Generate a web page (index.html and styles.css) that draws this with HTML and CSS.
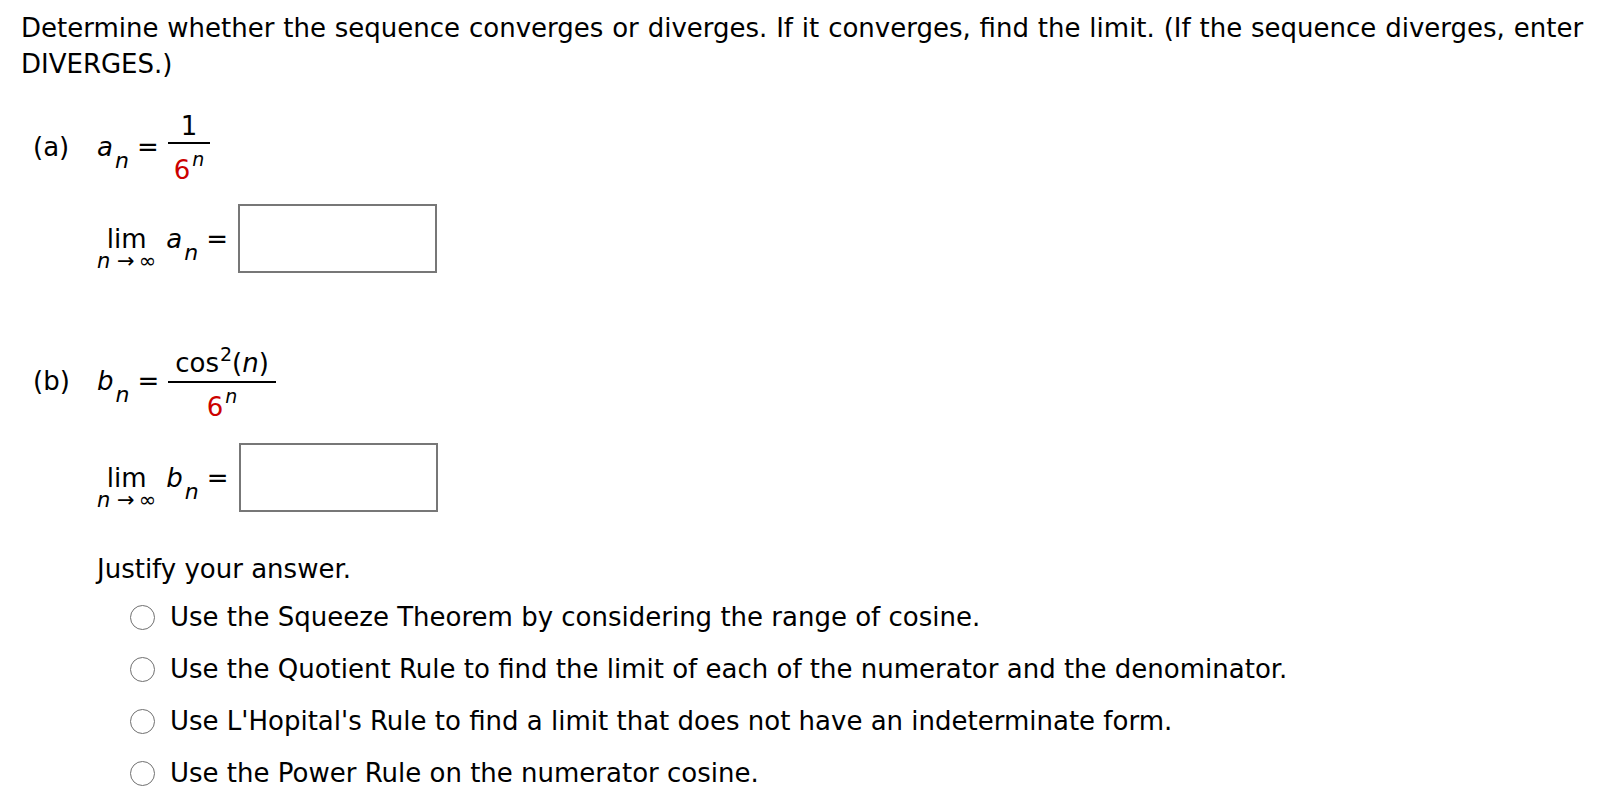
FILE: index.html
```html
<!DOCTYPE html>
<html lang="en">
<head>
<meta charset="utf-8">
<title>Sequence convergence</title>
<link rel="stylesheet" href="styles.css">
</head>
<body>
<div class="page">
  <p class="prompt">Determine whether the sequence converges or diverges. If it converges, find the limit. (If the sequence diverges, enter DIVERGES.)</p>

  <div class="part part-a">
    <div class="def"><span class="label">(a)</span><span class="var"><i>a</i><sub><i>n</i></sub></span><span class="eq">=</span><span class="frac frac-a"><span class="num">1</span><span class="den"><span class="red">6</span><sup><i>n</i></sup></span></span></div>
    <div class="lim-row lim-a"><span class="lim"><span class="lim-word">lim</span><span class="lim-under"><i>n</i> →&thinsp;∞</span></span><span class="var"><i>a</i><sub><i>n</i></sub></span><span class="eq">=</span><span class="answer-box"></span></div>
  </div>

  <div class="part part-b">
    <div class="def"><span class="label">(b)</span><span class="var"><i>b</i><sub><i>n</i></sub></span><span class="eq">=</span><span class="frac frac-b"><span class="num">cos<sup class="sq">2</sup>(<i>n</i>)</span><span class="den"><span class="red">6</span><sup><i>n</i></sup></span></span></div>
    <div class="lim-row lim-b"><span class="lim"><span class="lim-word">lim</span><span class="lim-under"><i>n</i> →&thinsp;∞</span></span><span class="var"><i>b</i><sub><i>n</i></sub></span><span class="eq">=</span><span class="answer-box"></span></div>
  </div>

  <div class="justify">
    <p class="justify-title">Justify your answer.</p>
    <ul class="choices">
      <li class="choice"><span class="radio"></span>Use the Squeeze Theorem by considering the range of cosine.</li>
      <li class="choice"><span class="radio"></span>Use the Quotient Rule to find the limit of each of the numerator and the denominator.</li>
      <li class="choice"><span class="radio"></span>Use L'Hopital's Rule to find a limit that does not have an indeterminate form.</li>
      <li class="choice"><span class="radio"></span>Use the Power Rule on the numerator cosine.</li>
    </ul>
  </div>
</div>
</body>
</html>
```

FILE: styles.css
```css
html, body {
  margin: 0;
  padding: 0;
  background: #fff;
}

body {
  font-family: "DejaVu Sans", Verdana, sans-serif;
  font-size: 26px;
  line-height: 36px;
  color: #000;
}

.page {
  padding: 10px 0 0 21px;
}

.prompt {
  margin: 0;
  max-width: 1578px;
  word-spacing: 0.6px;
}

i {
  font-style: italic;
}

.part {
  margin-left: 12px;
}

.def {
  white-space: nowrap;
}

.part-a .def {
  margin-top: 32px;
}

.part-b .def {
  margin-top: 78px;
}

.label {
  display: inline-block;
  width: 64px;
}

.var sub {
  font-size: 22px;
  line-height: 1;
  vertical-align: -12px;
  margin-left: 2px;
}

.eq {
  margin: 0 9px 0 8px;
}

.frac {
  display: inline-flex;
  flex-direction: column;
  align-items: stretch;
  text-align: center;
}

.frac-a {
  vertical-align: 21px;
}

.frac-b {
  vertical-align: 18px;
}

.num {
  line-height: 24px;
  padding: 0 6px;
  border-bottom: 2px solid #000;
}

.frac-a .num {
  padding-bottom: 4px;
}

.frac-b .num {
  padding: 0 7px 6px;
}

.den {
  line-height: 24px;
  padding: 14px 6px 0;
}

.frac-b .den {
  padding-top: 12px;
}

.red {
  color: #cc0000;
}

sup {
  font-size: 19px;
  line-height: 0;
  vertical-align: 13px;
  margin-left: 2px;
}

sup.sq {
  margin-left: 1px;
  vertical-align: 11px;
}

.lim-row {
  margin-left: 64px;
  white-space: nowrap;
}

.lim-a {
  margin-top: 22px;
}

.lim-b {
  margin-top: 24px;
}

.lim {
  display: inline-flex;
  flex-direction: column;
  align-items: center;
  margin-right: 10px;
}

.lim-word {
  line-height: 24px;
}

.lim-under {
  font-size: 21px;
  line-height: 18px;
  margin-top: 1px;
}

.answer-box {
  display: inline-block;
  width: 195px;
  height: 65px;
  border: 2px solid #777;
  vertical-align: -25px;
  margin-left: 1px;
}

.justify {
  margin-left: 76px;
  margin-top: 39px;
}

.justify-title {
  margin: 0;
}

.choices {
  list-style: none;
  margin: 12px 0 0 0;
  padding: 0 0 0 33px;
}

.choice {
  display: flex;
  align-items: center;
  margin-bottom: 16px;
}

.radio {
  flex: none;
  width: 23px;
  height: 23px;
  border: 1.5px solid #707070;
  border-radius: 50%;
  margin-right: 15px;
  box-sizing: content-box;
}
```
